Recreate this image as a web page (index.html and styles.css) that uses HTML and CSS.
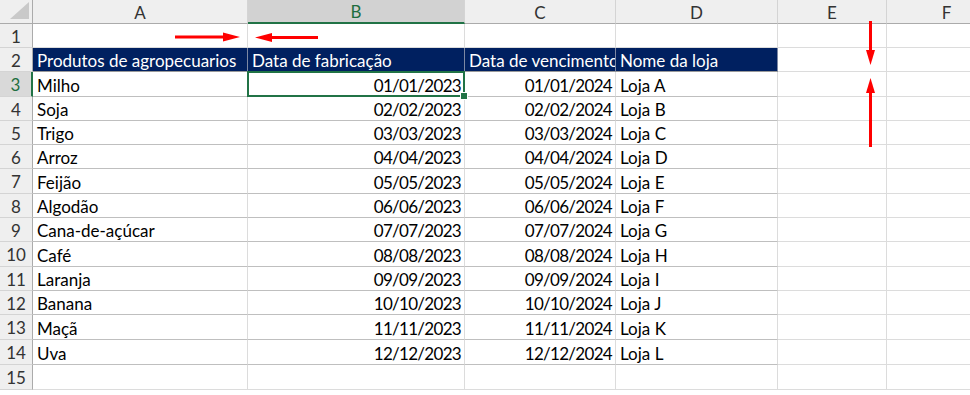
FILE: index.html
```html
<!DOCTYPE html>
<html lang="pt">
<head>
<meta charset="utf-8">
<title>Planilha</title>
<link rel="stylesheet" href="styles.css">
</head>
<body>
<div class="wrap">
  <div class="sheet">
    <div class="ch corner"><svg class="tri" width="20" height="18" viewBox="0 0 20 18"><polygon points="19,0 19,17 0,17" fill="#c9c9c9"/></svg></div>
    <div class="ch">A</div>
    <div class="ch selcol">B</div>
    <div class="ch">C</div>
    <div class="ch">D</div>
    <div class="ch">E</div>
    <div class="ch">F</div>

    <div class="rh">1</div><div class="c"></div><div class="c"></div><div class="c"></div><div class="c"></div><div class="c"></div><div class="c"></div>

    <div class="rh">2</div>
    <div class="c hd">Produtos de agropecuarios</div>
    <div class="c hd">Data de fabricação</div>
    <div class="c hd">Data de vencimento</div>
    <div class="c hd">Nome da loja</div>
    <div class="c"></div><div class="c"></div>

    <div class="rh selrow">3</div><div class="c tb">Milho</div><div class="c tb num sel">01/01/2023</div><div class="c tb num">01/01/2024</div><div class="c tb">Loja A</div><div class="c"></div><div class="c"></div>
    <div class="rh">4</div><div class="c tb">Soja</div><div class="c tb num">02/02/2023</div><div class="c tb num">02/02/2024</div><div class="c tb">Loja B</div><div class="c"></div><div class="c"></div>
    <div class="rh">5</div><div class="c tb">Trigo</div><div class="c tb num">03/03/2023</div><div class="c tb num">03/03/2024</div><div class="c tb">Loja C</div><div class="c"></div><div class="c"></div>
    <div class="rh">6</div><div class="c tb">Arroz</div><div class="c tb num">04/04/2023</div><div class="c tb num">04/04/2024</div><div class="c tb">Loja D</div><div class="c"></div><div class="c"></div>
    <div class="rh">7</div><div class="c tb">Feijão</div><div class="c tb num">05/05/2023</div><div class="c tb num">05/05/2024</div><div class="c tb">Loja E</div><div class="c"></div><div class="c"></div>
    <div class="rh">8</div><div class="c tb">Algodão</div><div class="c tb num">06/06/2023</div><div class="c tb num">06/06/2024</div><div class="c tb">Loja F</div><div class="c"></div><div class="c"></div>
    <div class="rh">9</div><div class="c tb">Cana-de-açúcar</div><div class="c tb num">07/07/2023</div><div class="c tb num">07/07/2024</div><div class="c tb">Loja G</div><div class="c"></div><div class="c"></div>
    <div class="rh">10</div><div class="c tb">Café</div><div class="c tb num">08/08/2023</div><div class="c tb num">08/08/2024</div><div class="c tb">Loja H</div><div class="c"></div><div class="c"></div>
    <div class="rh">11</div><div class="c tb">Laranja</div><div class="c tb num">09/09/2023</div><div class="c tb num">09/09/2024</div><div class="c tb">Loja I</div><div class="c"></div><div class="c"></div>
    <div class="rh">12</div><div class="c tb">Banana</div><div class="c tb num">10/10/2023</div><div class="c tb num">10/10/2024</div><div class="c tb">Loja J</div><div class="c"></div><div class="c"></div>
    <div class="rh">13</div><div class="c tb">Maçã</div><div class="c tb num">11/11/2023</div><div class="c tb num">11/11/2024</div><div class="c tb">Loja K</div><div class="c"></div><div class="c"></div>
    <div class="rh">14</div><div class="c tb">Uva</div><div class="c tb num">12/12/2023</div><div class="c tb num">12/12/2024</div><div class="c tb">Loja L</div><div class="c"></div><div class="c"></div>
    <div class="rh">15</div><div class="c"></div><div class="c"></div><div class="c"></div><div class="c"></div><div class="c"></div><div class="c"></div>
  </div>

  <svg class="arrows" width="970" height="395" viewBox="0 0 970 395">
    <line x1="175" y1="37" x2="226" y2="37" stroke="#ff0000" stroke-width="3"/>
    <polygon points="223,32.5 240,37 223,41.5" fill="#ff0000"/>
    <line x1="270" y1="37.5" x2="318" y2="37.5" stroke="#ff0000" stroke-width="3"/>
    <polygon points="272,33 255,37.5 272,42" fill="#ff0000"/>
    <line x1="870.5" y1="21" x2="870.5" y2="52" stroke="#ff0000" stroke-width="3"/>
    <polygon points="866,50 875,50 870.5,65" fill="#ff0000"/>
    <line x1="870.5" y1="91" x2="870.5" y2="147" stroke="#ff0000" stroke-width="3"/>
    <polygon points="866,93 875,93 870.5,78" fill="#ff0000"/>
  </svg>
</div>
</body>
</html>
```

FILE: styles.css
```css
* { box-sizing: border-box; }
html, body { margin: 0; padding: 0; background: #ffffff; }
body { width: 970px; height: 395px; overflow: hidden; font-family: Lato, "Liberation Sans", sans-serif; }

.wrap { position: relative; width: 970px; height: 395px; overflow: hidden; }

.sheet {
  display: grid;
  grid-template-columns: 33px 215px 217px 151px 162px 109px 120px;
  grid-template-rows: 24px 24px 24px 25px 24px 24px 24px 25px 24px 24px 25px 24px 24px 25px 25px 25px;
  width: 1007px;
}

.ch {
  background: #efefef;
  border-right: 1px solid #d4d4d4;
  border-bottom: 1px solid #ababab;
  display: flex;
  align-items: center;
  justify-content: center;
  font-size: 17px;
  color: #333333;
  padding-top: 1px;
}
.corner { position: relative; border-right: 1px solid #ababab; }
.tri { position: absolute; right: 2px; bottom: 3px; }
.selcol {
  background: #d2d2d2;
  color: #1e6e3f;
  border-bottom: 2px solid #217346;
}

.rh {
  background: #efefef;
  border-right: 1px solid #ababab;
  border-bottom: 1px solid #d4d4d4;
  display: flex;
  align-items: center;
  justify-content: center;
  font-size: 17px;
  color: #333333;
  padding-top: 1px;
}
.selrow {
  background: #d9d9d9;
  color: #1e6e3f;
  border-right: 2px solid #217346;
}

.c {
  border-right: 1px solid #dcdcdc;
  border-bottom: 1px solid #dcdcdc;
  display: flex;
  align-items: center;
  padding: 2px 4px 0 4px;
  font-size: 17px;
  color: #000000;
  white-space: nowrap;
  overflow: hidden;
  min-width: 0;
}
.num { justify-content: flex-end; padding-right: 3px; letter-spacing: -0.7px; }
.tb { border-bottom: 1px solid #bfbfbf; }
.hd {
  background: #002060;
  color: #ffffff;
  border-right: 1px solid #7d88a3;
  border-bottom: 1px solid #9a9a9a;
}

.sel { position: relative; overflow: visible; }
.sel::after {
  content: "";
  position: absolute;
  left: -1px; top: -1px; right: -1px; bottom: -1px;
  border: 2px solid #217346;
}
.sel::before {
  content: "";
  position: absolute;
  right: -4px; bottom: -4px;
  width: 6px; height: 6px;
  background: #217346;
  border: 1px solid #ffffff;
  z-index: 2;
}

.arrows { position: absolute; left: 0; top: 0; pointer-events: none; }
```
